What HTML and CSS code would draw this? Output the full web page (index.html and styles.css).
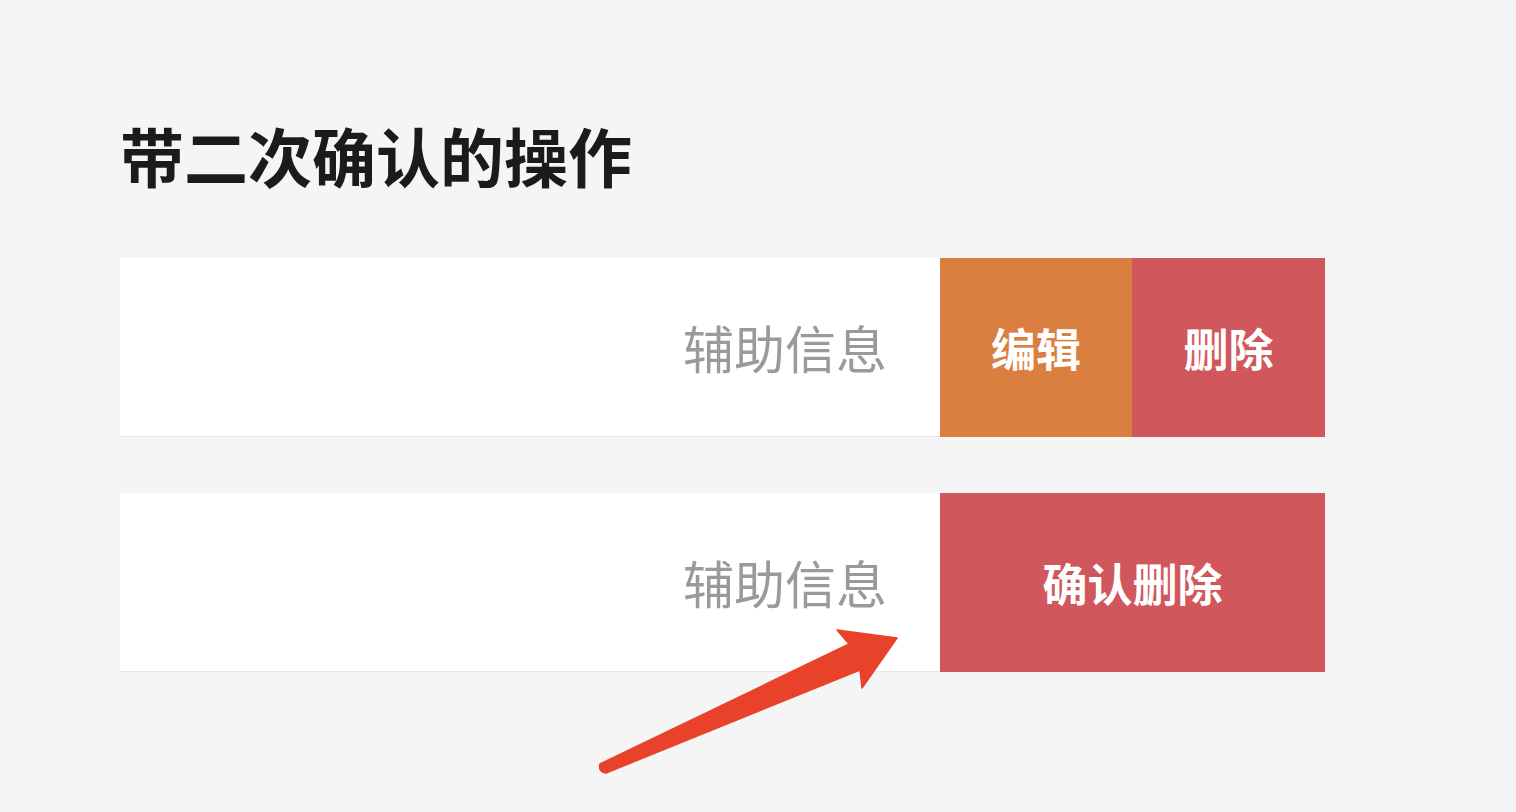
FILE: index.html
```html
<!DOCTYPE html>
<html lang="zh-CN">
<head>
<meta charset="utf-8">
<title>带二次确认的操作</title>
<link rel="stylesheet" href="styles.css">
</head>
<body>
<main class="page">
  <h1 class="title">带二次确认的操作</h1>
  <div class="list">
    <div class="row">
      <div class="info">辅助信息</div>
      <div class="actions">
        <button class="btn btn-edit">编辑</button>
        <button class="btn btn-delete">删除</button>
      </div>
    </div>
    <div class="row">
      <div class="info">辅助信息</div>
      <div class="actions">
        <button class="btn btn-delete btn-wide">确认删除</button>
      </div>
    </div>
  </div>
</main>
<svg class="arrow" width="1516" height="812" viewBox="0 0 1516 812" aria-hidden="true">
  <path d="M600 764 L849 644 L837 630 L897 638 L862 688 L860 670 L606 773 Q598 772 600 764 Z" fill="#e8432a" stroke="#e8432a" stroke-width="1.5" stroke-linejoin="round"/>
</svg>
</body>
</html>
```
FILE: styles.css
```css
html, body {
  margin: 0;
  padding: 0;
  background: #f5f5f5;
}
body {
  font-family: "Noto Sans CJK SC", "Noto Sans", sans-serif;
  width: 1516px;
  height: 812px;
  overflow: hidden;
  position: relative;
}
.page {
  padding: 122px 191px 0 120px;
}
.title {
  margin: 0;
  font-size: 64px;
  line-height: 64px;
  height: 68px;
  font-weight: 700;
  color: #1b1b1b;
}
.list {
  margin-top: 68px;
  display: flex;
  flex-direction: column;
  gap: 56px;
}
.row {
  display: flex;
  height: 179px;
}
.info {
  flex: 1;
  background: #fff;
  border-bottom: 1px solid #e6e6e6;
  display: flex;
  align-items: center;
  justify-content: flex-end;
  padding-right: 53px;
  font-size: 51px;
  color: #9a9a9a;
  font-weight: 400;
}
.actions {
  display: flex;
  width: 385px;
}
.btn {
  border: 0;
  margin: 0;
  padding: 0;
  font-family: "Noto Sans CJK SC", sans-serif;
  font-size: 45px;
  font-weight: 700;
  color: #fff;
  display: flex;
  align-items: center;
  justify-content: center;
}
.btn-edit {
  width: 192px;
  background: #db7f41;
}
.btn-delete {
  flex: 1;
  background: #d0585c;
}
.btn-wide {
  width: 385px;
}
.arrow {
  position: absolute;
  left: 0;
  top: 0;
  pointer-events: none;
}
```
